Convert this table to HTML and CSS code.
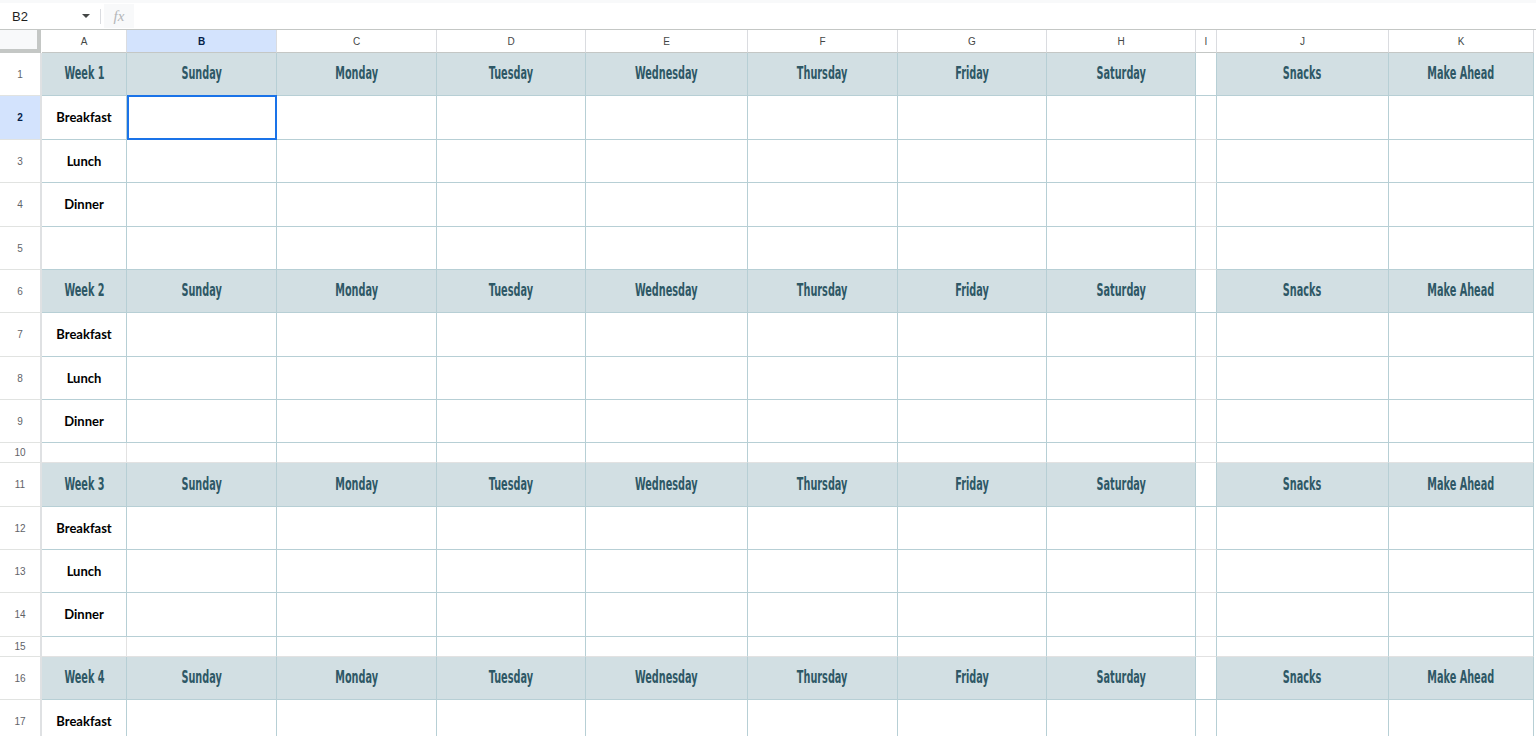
FILE: index.html
```html
<!DOCTYPE html>
<html lang="en">
<head>
<meta charset="utf-8">
<title>Meal Planner</title>
<link rel="stylesheet" href="styles.css">
</head>
<body>
<div class="formula-bar">
  <div class="name-box"><span class="ref">B2</span><span class="caret"></span></div>
  <div class="fb-sep"></div>
  <div class="fx">fx</div>
  <div class="fb-input"></div>
</div>
<div class="sheet">
  <div class="row col-head">
    <div class="corner"></div>
    <div class="ch">A</div><div class="ch sel">B</div><div class="ch">C</div><div class="ch">D</div><div class="ch">E</div><div class="ch">F</div><div class="ch">G</div><div class="ch">H</div><div class="ch">I</div><div class="ch">J</div><div class="ch">K</div>
  </div>

  <div class="row band h43">
    <div class="rh">1</div>
    <div class="c"><span class="hd">Week 1</span></div><div class="c"><span class="hd">Sunday</span></div><div class="c"><span class="hd">Monday</span></div><div class="c"><span class="hd">Tuesday</span></div><div class="c"><span class="hd">Wednesday</span></div><div class="c"><span class="hd">Thursday</span></div><div class="c"><span class="hd">Friday</span></div><div class="c"><span class="hd">Saturday</span></div><div class="c gap"></div><div class="c"><span class="hd">Snacks</span></div><div class="c"><span class="hd">Make Ahead</span></div>
  </div>
  <div class="row h44">
    <div class="rh sel">2</div>
    <div class="c lbl">Breakfast</div><div class="c active"></div><div class="c"></div><div class="c"></div><div class="c"></div><div class="c"></div><div class="c"></div><div class="c"></div><div class="c gap"></div><div class="c"></div><div class="c"></div>
  </div>
  <div class="row h43">
    <div class="rh">3</div>
    <div class="c lbl">Lunch</div><div class="c"></div><div class="c"></div><div class="c"></div><div class="c"></div><div class="c"></div><div class="c"></div><div class="c"></div><div class="c gap"></div><div class="c"></div><div class="c"></div>
  </div>
  <div class="row h44">
    <div class="rh">4</div>
    <div class="c lbl">Dinner</div><div class="c"></div><div class="c"></div><div class="c"></div><div class="c"></div><div class="c"></div><div class="c"></div><div class="c"></div><div class="c gap"></div><div class="c"></div><div class="c"></div>
  </div>
  <div class="row h43">
    <div class="rh">5</div>
    <div class="c"></div><div class="c"></div><div class="c"></div><div class="c"></div><div class="c"></div><div class="c"></div><div class="c"></div><div class="c"></div><div class="c gap"></div><div class="c"></div><div class="c"></div>
  </div>

  <div class="row band h43">
    <div class="rh">6</div>
    <div class="c"><span class="hd">Week 2</span></div><div class="c"><span class="hd">Sunday</span></div><div class="c"><span class="hd">Monday</span></div><div class="c"><span class="hd">Tuesday</span></div><div class="c"><span class="hd">Wednesday</span></div><div class="c"><span class="hd">Thursday</span></div><div class="c"><span class="hd">Friday</span></div><div class="c"><span class="hd">Saturday</span></div><div class="c gap"></div><div class="c"><span class="hd">Snacks</span></div><div class="c"><span class="hd">Make Ahead</span></div>
  </div>
  <div class="row h44">
    <div class="rh">7</div>
    <div class="c lbl">Breakfast</div><div class="c"></div><div class="c"></div><div class="c"></div><div class="c"></div><div class="c"></div><div class="c"></div><div class="c"></div><div class="c gap"></div><div class="c"></div><div class="c"></div>
  </div>
  <div class="row h43">
    <div class="rh">8</div>
    <div class="c lbl">Lunch</div><div class="c"></div><div class="c"></div><div class="c"></div><div class="c"></div><div class="c"></div><div class="c"></div><div class="c"></div><div class="c gap"></div><div class="c"></div><div class="c"></div>
  </div>
  <div class="row h43">
    <div class="rh">9</div>
    <div class="c lbl">Dinner</div><div class="c"></div><div class="c"></div><div class="c"></div><div class="c"></div><div class="c"></div><div class="c"></div><div class="c"></div><div class="c gap"></div><div class="c"></div><div class="c"></div>
  </div>
  <div class="row spacer h20">
    <div class="rh">10</div>
    <div class="c"></div><div class="c"></div><div class="c"></div><div class="c"></div><div class="c"></div><div class="c"></div><div class="c"></div><div class="c"></div><div class="c gap"></div><div class="c"></div><div class="c"></div>
  </div>

  <div class="row band h44">
    <div class="rh">11</div>
    <div class="c"><span class="hd">Week 3</span></div><div class="c"><span class="hd">Sunday</span></div><div class="c"><span class="hd">Monday</span></div><div class="c"><span class="hd">Tuesday</span></div><div class="c"><span class="hd">Wednesday</span></div><div class="c"><span class="hd">Thursday</span></div><div class="c"><span class="hd">Friday</span></div><div class="c"><span class="hd">Saturday</span></div><div class="c gap"></div><div class="c"><span class="hd">Snacks</span></div><div class="c"><span class="hd">Make Ahead</span></div>
  </div>
  <div class="row h43">
    <div class="rh">12</div>
    <div class="c lbl">Breakfast</div><div class="c"></div><div class="c"></div><div class="c"></div><div class="c"></div><div class="c"></div><div class="c"></div><div class="c"></div><div class="c gap"></div><div class="c"></div><div class="c"></div>
  </div>
  <div class="row h43">
    <div class="rh">13</div>
    <div class="c lbl">Lunch</div><div class="c"></div><div class="c"></div><div class="c"></div><div class="c"></div><div class="c"></div><div class="c"></div><div class="c"></div><div class="c gap"></div><div class="c"></div><div class="c"></div>
  </div>
  <div class="row h44">
    <div class="rh">14</div>
    <div class="c lbl">Dinner</div><div class="c"></div><div class="c"></div><div class="c"></div><div class="c"></div><div class="c"></div><div class="c"></div><div class="c"></div><div class="c gap"></div><div class="c"></div><div class="c"></div>
  </div>
  <div class="row spacer h20">
    <div class="rh">15</div>
    <div class="c"></div><div class="c"></div><div class="c"></div><div class="c"></div><div class="c"></div><div class="c"></div><div class="c"></div><div class="c"></div><div class="c gap"></div><div class="c"></div><div class="c"></div>
  </div>

  <div class="row band h43">
    <div class="rh">16</div>
    <div class="c"><span class="hd">Week 4</span></div><div class="c"><span class="hd">Sunday</span></div><div class="c"><span class="hd">Monday</span></div><div class="c"><span class="hd">Tuesday</span></div><div class="c"><span class="hd">Wednesday</span></div><div class="c"><span class="hd">Thursday</span></div><div class="c"><span class="hd">Friday</span></div><div class="c"><span class="hd">Saturday</span></div><div class="c gap"></div><div class="c"><span class="hd">Snacks</span></div><div class="c"><span class="hd">Make Ahead</span></div>
  </div>
  <div class="row h43">
    <div class="rh">17</div>
    <div class="c lbl">Breakfast</div><div class="c"></div><div class="c"></div><div class="c"></div><div class="c"></div><div class="c"></div><div class="c"></div><div class="c"></div><div class="c gap"></div><div class="c"></div><div class="c"></div>
  </div>
</div>
</body>
</html>
```

FILE: styles.css
```css
* { box-sizing: border-box; }
html, body {
  margin: 0;
  padding: 0;
  height: 736px;
  overflow: hidden;
  background: #fff;
  font-family: "Liberation Sans", Arial, sans-serif;
}

/* formula bar */
.formula-bar {
  display: flex;
  align-items: center;
  height: 30px;
  border-top: 3px solid #f8f9fa;
  border-bottom: 1px solid #c4c7c5;
  background: #fff;
}
.name-box {
  display: flex;
  align-items: center;
  justify-content: space-between;
  width: 100px;
  padding: 0 10px 0 12px;
}
.ref {
  font-size: 13px;
  color: #1f1f1f;
}
.caret {
  width: 0;
  height: 0;
  border-left: 4px solid transparent;
  border-right: 4px solid transparent;
  border-top: 4px solid #444746;
}
.fb-sep {
  width: 1px;
  height: 15px;
  background: #dadce0;
}
.fx {
  display: flex;
  align-items: center;
  justify-content: center;
  width: 30px;
  height: 24px;
  margin-left: 3px;
  background: #f8f9fa;
  font-family: "Liberation Serif", serif;
  font-style: italic;
  font-size: 15px;
  color: #b4b6b8;
}
.fb-input { flex: 1; }

/* grid */
.row {
  display: grid;
  grid-template-columns: 42px 85px 150px 160px 149px 162px 150px 149px 149px 21px 172px 145px;
}
.h43 { height: 43px; }
.h44 { height: 44px; }
.h20 { height: 20px; }

.col-head { height: 23px; }
.corner {
  background: #f8f9fa;
  border-right: 4px solid #c4c7c5;
  border-bottom: 4px solid #c4c7c5;
  margin-right: 1px;
}
.ch {
  display: flex;
  align-items: center;
  justify-content: center;
  border-right: 1px solid #dadce0;
  border-bottom: 1px solid #c4c7c5;
  font-size: 10px;
  color: #444746;
  background: #fff;
}
.ch.sel {
  background: #d3e3fd;
  color: #041e49;
  font-weight: 700;
}

.rh {
  display: flex;
  align-items: center;
  justify-content: center;
  border-right: 2px solid #dfe1e3;
  border-bottom: 1px solid #e1e3e1;
  font-size: 10px;
  color: #5f6368;
  background: #fff;
}
.rh.sel {
  background: #d3e3fd;
  color: #041e49;
  font-weight: 700;
}

.c {
  display: flex;
  align-items: center;
  justify-content: center;
  border-right: 1px solid #b7cfd5;
  border-bottom: 1px solid #b7cfd5;
  background: #fff;
}
.band .c { background: #d2dfe3; }
.band .c.gap { background: #fff; border-bottom-color: #b7cfd5; }
.c.gap { border-bottom-color: #e2e2e2; }
.spacer .c { border-bottom-color: #e2e2e2; }
.spacer .c:nth-child(2) { border-right-color: #e2e2e2; }

.hd {
  display: inline-block;
  margin-top: -3px;
  font-family: "Liberation Sans Narrow", "DejaVu Sans Condensed", "Liberation Sans", sans-serif;
  font-stretch: condensed;
  font-weight: 700;
  font-size: 18px;
  color: #2e5866;
  transform: scaleX(0.6);
  white-space: nowrap;
}
.lbl {
  padding-bottom: 1px;
  font-family: Lato, "Liberation Sans", sans-serif;
  font-weight: 700;
  font-size: 13px;
  color: #000;
}

.active { position: relative; }
.active::after {
  content: "";
  position: absolute;
  top: -1px;
  left: 0;
  right: -1px;
  bottom: -1px;
  border: 2px solid #1a73e8;
}
```
